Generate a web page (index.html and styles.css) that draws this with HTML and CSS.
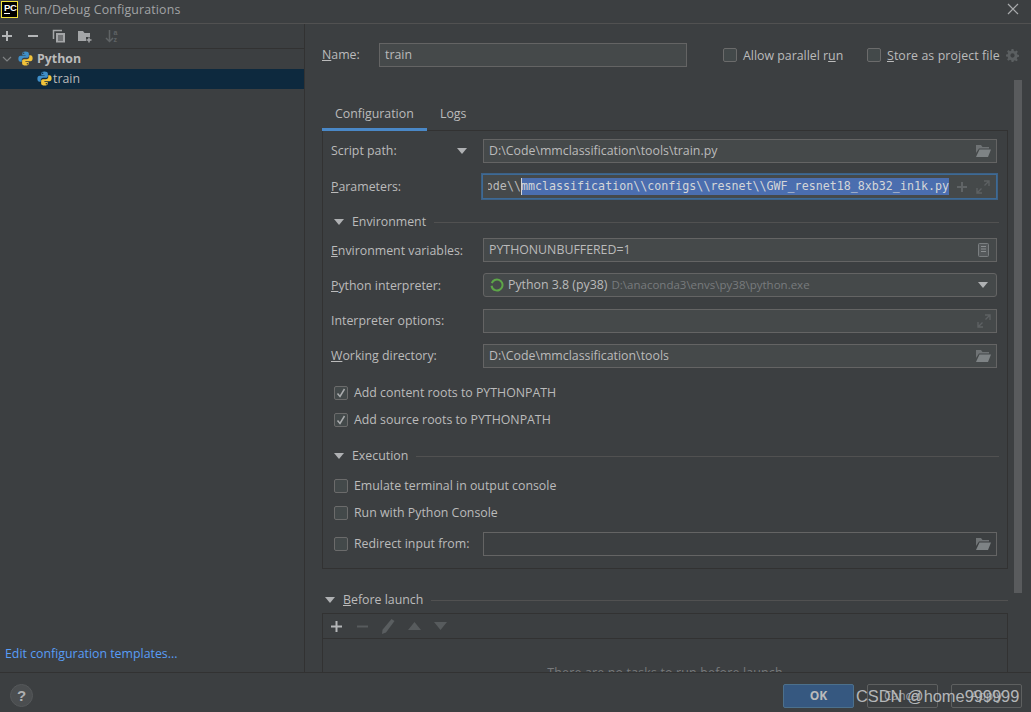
FILE: index.html
```html
<!DOCTYPE html>
<html lang="en">
<head>
<meta charset="utf-8">
<title>Run/Debug Configurations</title>
<link rel="stylesheet" href="styles.css">
</head>
<body>
<svg class="defs" width="0" height="0" aria-hidden="true">
  <defs>
    <symbol id="py" viewBox="0 0 16 16">
      <path fill="#3f8fc9" d="M7.9.5C5.6.5 4.6 1.4 4.6 2.8v1.6h3.5V5H2.8C1.3 5 .4 6.2.4 8.2s.9 3.3 2.3 3.3h1.3V9.7c0-1.4 1.1-2.4 2.5-2.4h3.2c1.1 0 1.9-.8 1.9-1.9V2.8C11.6 1.3 10.1.5 7.9.5zM6 1.5a.8.8 0 1 1 0 1.7.8.8 0 0 1 0-1.7z"/>
      <path fill="#f2c33a" d="M8.1 15.5c2.3 0 3.3-.9 3.3-2.3v-1.6H7.9V11h5.3c1.5 0 2.4-1.2 2.4-3.2s-.9-3.3-2.3-3.3H12v1.8c0 1.4-1.1 2.4-2.5 2.4H6.300c-1.1 0-1.9.8-1.9 1.900v2.600c0 1.500 1.500 2.300 3.700 2.300zM10 14.500a.8.8 0 1 1 0-1.700.8.8 0 0 1 0 1.700z"/>
    </symbol>
    <symbol id="folder" viewBox="0 0 16 14">
      <path fill="#6f7375" d="M1 1h5l1.500 2H14v1.500H4L1 9z"/>
      <path fill="#7e8385" d="M4.500 5.500H16L13 13H1z"/>
    </symbol>
    <symbol id="expand" viewBox="0 0 14 14">
      <path fill="none" stroke="#5d6163" stroke-width="1.400" d="M8 1h5v5M13 1 8.500 5.500M1 8v5h5M1 13l4.500-4.500"/>
    </symbol>
  </defs>
</svg>

<div class="dialog">
  <header class="titlebar">
    <span class="logo"><span class="logo-text">PC</span><span class="logo-bar"></span></span>
    <span class="title">Run/Debug Configurations</span>
    <svg class="close" width="12" height="12" viewBox="0 0 12 12"><path d="M1 1l10 10M11 1 1 11" stroke="#a9abad" stroke-width="1.200" fill="none"/></svg>
  </header>

  <main class="main">
    <aside class="sidebar">
      <div class="side-toolbar">
        <svg width="12" height="12" viewBox="0 0 12 12"><path d="M6 1v10M1 6h10" stroke="#b4b6b8" stroke-width="2"/></svg>
        <svg width="12" height="12" viewBox="0 0 12 12"><path d="M1 6h10" stroke="#b4b6b8" stroke-width="2"/></svg>
        <svg width="14" height="14" viewBox="0 0 14 14"><path d="M1.500 10V1.500H10" fill="none" stroke="#a4a6a8" stroke-width="1.500"/><rect x="4" y="4" width="9" height="9.500" fill="#a4a6a8"/><path d="M6 7h5M6 9h5M6 11h5" stroke="#3c3f41"/></svg>
        <svg width="16" height="14" viewBox="0 0 16 14"><path d="M1 2h5l1.500 2H13v4H9v4H1z" fill="#a4a6a8"/><path d="M12 8.500v5M9.500 11h5" stroke="#a4a6a8" stroke-width="1.500"/></svg>
        <span class="sort">
          <svg width="9" height="14" viewBox="0 0 9 14"><path d="M4.500 1v11M1 9l3.500 3.500L8 9" fill="none" stroke="#5f6365" stroke-width="1.500"/></svg>
          <span class="sort-letters">a<br>z</span>
        </span>
      </div>
      <ul class="tree">
        <li class="tree-row">
          <svg class="chev" width="10" height="6" viewBox="0 0 10 6"><path d="M1 1l4 4 4-4" fill="none" stroke="#7f8284" stroke-width="1.200"/></svg>
          <svg class="py" width="15" height="15"><use href="#py"/></svg>
          <b class="tree-label">Python</b>
        </li>
        <li class="tree-row selected">
          <svg class="py" width="15" height="15"><use href="#py"/></svg>
          <span class="tree-label train">train</span>
        </li>
      </ul>
      <a class="templates">Edit configuration templates...</a>
    </aside>

    <section class="content">
      <div class="name-row">
        <label class="name-label"><u>N</u>ame:</label>
        <div class="field name-field"><span>train</span></div>
        <label class="check allow"><span class="box"></span><span class="top-text">Allow parallel r<u>u</u>n</span></label>
        <label class="check store"><span class="box"></span><span class="top-text"><u>S</u>tore as project file</span></label>
        <svg class="gear" width="13" height="13" viewBox="0 0 14 14"><path fill="#5b5f61" fill-rule="evenodd" d="M6 0h2l.4 2 1.300.6L11.400 1.500 12.800 3l-1.100 1.700.5 1.300 1.800.4v2l-1.900.4-.5 1.300 1.100 1.700-1.400 1.400-1.700-1.100-1.200.5L8 14H6l-.4-1.900-1.300-.5-1.700 1.100L1.200 11.300l1.100-1.700-.5-1.300L0 8V6l1.800-.4.500-1.300L1.200 2.600 2.600 1.200l1.700 1.100 1.300-.5zM7 4.700a2.300 2.300 0 1 0 0 4.600 2.300 2.300 0 0 0 0-4.600z"/></svg>
      </div>

      <nav class="tabs">
        <span class="tab active">Configuration</span>
        <span class="tab">Logs</span>
      </nav>

      <div class="panel">
        <div class="row first">
          <div class="label script-label"><span>Script path:</span><i class="tri"></i></div>
          <div class="field"><span>D:\Code\mmclassification\tools\train.py</span><svg class="ficon" width="16" height="14"><use href="#folder"/></svg></div>
        </div>
        <div class="row params">
          <div class="label"><span><u>P</u>arameters:</span></div>
          <div class="field focused">
            <div class="param-text"><span class="param-inner">D:\\Code\\<span class="sel"><i class="caret"></i>mmclassification\\configs\\resnet\\GWF_resnet18_8xb32_in1k.py</span></span></div>
            <svg class="fplus" width="10" height="10" viewBox="0 0 10 10"><path d="M5 0v10M0 5h10" stroke="#606466" stroke-width="2"/></svg>
            <svg class="fexp" width="14" height="14"><use href="#expand"/></svg>
          </div>
        </div>

        <div class="section env-head"><i class="tri"></i><span>Environment</span><span class="line"></span></div>
        <div class="row env-first">
          <div class="label low"><span><u>E</u>nvironment variables:</span></div>
          <div class="field"><span>PYTHONUNBUFFERED=1</span>
            <svg class="ficon doc" width="11" height="14" viewBox="0 0 11 14"><rect x=".5" y=".5" width="10" height="13" rx="1" fill="#55595b" stroke="#7a7e80"/><path d="M3 3.500h5M3 6h5M3 8.500h5" stroke="#8a8e90"/></svg>
          </div>
        </div>
        <div class="row">
          <div class="label low"><span><u>P</u>ython interpreter:</span></div>
          <div class="field combo">
            <svg class="spin" width="14" height="14" viewBox="0 0 14 14"><circle cx="7" cy="7" r="5.500" fill="none" stroke="#5da648" stroke-width="2" stroke-dasharray="31 3.600" transform="rotate(200 7 7)"/></svg>
            <span>Python 3.8 (py38)</span><span class="muted">D:\anaconda3\envs\py38\python.exe</span>
            <i class="tri end"></i>
          </div>
        </div>
        <div class="row options">
          <div class="label"><span>Interpreter options:</span></div>
          <div class="field"><svg class="ficon" width="14" height="14"><use href="#expand"/></svg></div>
        </div>
        <div class="row">
          <div class="label"><span><u>W</u>orking directory:</span></div>
          <div class="field"><span>D:\Code\mmclassification\tools</span><svg class="ficon" width="16" height="14"><use href="#folder"/></svg></div>
        </div>

        <label class="check line-check c1"><span class="box on"><svg width="12" height="12" viewBox="0 0 12 12"><path d="M2.500 6.500 5 9.500l4.500-7.500" fill="none" stroke="#a9abad" stroke-width="1.500"/></svg></span><span>Add content roots to PYTHONPATH</span></label>
        <label class="check line-check c2"><span class="box on"><svg width="12" height="12" viewBox="0 0 12 12"><path d="M2.500 6.500 5 9.500l4.500-7.500" fill="none" stroke="#a9abad" stroke-width="1.500"/></svg></span><span>Add source roots to PYTHONPATH</span></label>

        <div class="section exec-head"><i class="tri"></i><span>Execution</span><span class="line"></span></div>
        <label class="check line-check c3"><span class="box"></span><span>Emulate terminal in output console</span></label>
        <label class="check line-check c2"><span class="box"></span><span>Run with Python Console</span></label>
        <div class="row redirect">
          <label class="check line-check"><span class="box"></span><span>Redirect input from:</span></label>
          <div class="field empty"><svg class="ficon" width="16" height="14"><use href="#folder"/></svg></div>
        </div>
      </div>

      <div class="section before-head"><i class="tri"></i><span><u>B</u>efore launch</span><span class="line"></span></div>
      <div class="tasks">
        <div class="tasks-toolbar">
          <svg width="11" height="11" viewBox="0 0 11 11"><path d="M5.500 0v11M0 5.500h11" stroke="#b4b6b8" stroke-width="2"/></svg>
          <svg width="11" height="11" viewBox="0 0 11 11"><path d="M0 5.500h11" stroke="#575b5d" stroke-width="2"/></svg>
          <svg width="14" height="15" viewBox="0 0 14 15"><path d="M10.500 0 13.500 2 5 13.500 1 15l.5-4.300z" fill="#5a5e60"/></svg>
          <svg width="13" height="8" viewBox="0 0 13 8"><path d="M6.500 0 13 8H0z" fill="#575b5d"/></svg>
          <svg width="13" height="8" viewBox="0 0 13 8"><path d="M0 0h13L6.500 8z" fill="#575b5d"/></svg>
        </div>
        <p class="tasks-empty">There are no tasks to run before launch</p>
      </div>

      <div class="scrollbar"></div>
    </section>
  </main>

  <footer class="footer">
    <span class="help">?</span>
    <div class="buttons">
      <button class="btn primary">OK</button>
      <button class="btn">Cancel</button>
      <button class="btn">Apply</button>
    </div>
  </footer>
  <div class="watermark">CSDN @home999999</div>
</div>
</body>
</html>
```

FILE: styles.css
```css
* { box-sizing: border-box; }
html, body { margin: 0; padding: 0; }
body {
  width: 1031px;
  height: 712px;
  overflow: hidden;
  background: #3c3f41;
  color: #bbbbbb;
  font: 12.35px/16px "Open Sans", "Noto Sans", sans-serif;
}
.defs { position: absolute; }
.dialog { position: relative; width: 1031px; height: 712px; display: flex; flex-direction: column; }
i { display: block; }

/* title bar */
.titlebar {
  height: 24px;
  flex: none;
  display: flex;
  align-items: center;
  border-bottom: 1px solid #515151;
  padding: 0 12px 3px 1px;
}
.logo {
  width: 17px;
  height: 17px;
  align-self: flex-start;
  margin-top: 1px;
  background: #000;
  border: 1px solid #f3e33a;
  display: flex;
  flex-direction: column;
  align-items: flex-start;
  padding: 1px 0 0 2px;
  overflow: hidden;
}
.logo-text { color: #fff; font: bold 9.5px/10px "Liberation Sans", sans-serif; letter-spacing: -.4px; }
.logo-bar { width: 6px; height: 1px; background: #fff; }
.title { margin-left: 6px; color: #a2a4a6; letter-spacing: .15px; }
.close { margin-left: auto; margin-bottom: 3px; }

/* layout */
.main { flex: 1; min-height: 0; display: flex; overflow: hidden; }
.sidebar {
  width: 305px;
  flex: none;
  display: flex;
  flex-direction: column;
  border-right: 1px solid #323232;
}
.side-toolbar {
  height: 25px;
  flex: none;
  display: grid;
  grid-auto-flow: column;
  grid-auto-columns: 26px;
  justify-content: start;
  justify-items: center;
  align-items: center;
  margin-left: -6px;
  border-bottom: 1px solid #323232;
}
.sort { display: flex; align-items: center; }
.sort-letters { font: bold 7px/7px "Liberation Sans", sans-serif; color: #5f6365; }
.tree { list-style: none; margin: 0; padding: 0; flex: 1; }
.tree-row { height: 20px; display: flex; align-items: center; padding: 0 0 1px 2px; }
.tree-row.selected { background: #0d293e; padding-left: 37px; }
.chev { margin-right: 6px; }
.py { flex: none; }
.tree-label { margin-left: 4px; }
.tree-label.train { margin-left: 1px; }
.templates { color: #589df6; padding: 0 0 10px 5px; }

.content { position: relative; flex: 1; min-width: 0; padding: 19px 23px 0 17px; }
.name-row { display: flex; align-items: center; height: 24px; }
.name-label { width: 57px; flex: none; }
.name-field { width: 308px; flex: none; }
.allow { margin-left: 36px; width: 144px; flex: none; }
.store { width: 139px; flex: none; letter-spacing: .1px; }
.top-text { position: relative; top: 1px; }
.gear { flex: none; margin-top: 1px; }

.check { display: flex; align-items: center; gap: 6px; }
.box {
  width: 14px;
  height: 14px;
  flex: none;
  border: 1px solid #6b6b6b;
  border-radius: 2px;
  background: #43494a;
  display: flex;
  align-items: center;
  justify-content: center;
}

/* fields */
.field {
  position: relative;
  height: 24px;
  display: flex;
  align-items: center;
  padding: 0 5px;
  background: #45494a;
  border: 1px solid #646464;
  min-width: 0;
}
.ficon { margin-left: auto; flex: none; }
.ficon.doc { margin-right: 2px; }
.field.empty { background: #3c3f41; }
.combo { border-radius: 3px; }
.spin { flex: none; margin-right: 4px; margin-left: 1px; }
.muted { color: #787b7d; font-size: 11.5px; margin-left: 4px; }
.tri {
  width: 0;
  height: 0;
  flex: none;
  border-left: 5px solid transparent;
  border-right: 5px solid transparent;
  border-top: 6px solid #afb1b3;
}
.tri.end { margin-left: auto; margin-right: 3px; }

/* tabs */
.tabs { display: flex; height: 30px; margin-top: 33px; }
.tab { padding: 6px 13px 0; height: 30px; }
.tab.active { width: 105px; height: 31px; border-bottom: 3px solid #4a88c7; position: relative; z-index: 1; }

/* panel */
.panel {
  width: 686px;
  height: 439px;
  border: 1px solid #323232;
  padding: 8px 10px 0 8px;
}
.row { display: grid; grid-template-columns: 152px 1fr; align-items: center; margin-top: 11px; height: 24px; }
.row.first { margin-top: 0; }
.label { display: flex; align-items: center; }
.label.low { position: relative; top: 1px; }
.script-label { justify-content: space-between; padding-right: 16px; }
.focused {
  height: 25px;
  margin-left: -1px;
  background: #45494a;
  border: 1px solid #3d6a96;
  box-shadow: 0 0 0 1px #3d6185;
}
.param-text {
  width: 461px;
  flex: none;
  display: flex;
  justify-content: flex-end;
  overflow: hidden;
  white-space: nowrap;
  font: 11.66px/17px "DejaVu Sans Mono", monospace;
}
.param-inner { flex: none; }
.sel { position: relative; display: inline-block; background: #4b6eaf; color: #d4d6d8; }
.caret { position: absolute; left: 0; top: 0; width: 1px; height: 17px; background: #d4d6d8; }
.fplus { margin-left: 8px; flex: none; }
.fexp { margin-left: 9px; flex: none; }

.section { display: flex; align-items: center; gap: 8px; height: 16px; }
.section .line { flex: 1; height: 1px; background: #515151; }
.env-head { margin: 16px 0 0 3px; width: 665px; }
.env-first { margin-top: 8px; }
.row.options { margin-top: 12px; }
.line-check { height: 20px; margin-left: 3px; }
.c1 { margin-top: 15px; }
.c2 { margin-top: 7px; }
.c3 { margin-top: 12px; }
.exec-head { margin: 18px 0 0 3px; width: 665px; }
.row.redirect { margin-top: 9px; }
.row.redirect .line-check { margin-top: -1px; }
.before-head { margin-top: 23px; margin-left: 3px; width: 683px; }

.tasks { width: 686px; margin-top: 5px; height: 200px; border: 1px solid #323232; }
.tasks-toolbar {
  height: 25px;
  display: grid;
  grid-auto-flow: column;
  grid-auto-columns: 26px;
  justify-content: start;
  justify-items: center;
  align-items: center;
  border-bottom: 1px solid #323232;
}
.tasks-empty { margin: 26px 0 0; text-align: center; color: #77797b; letter-spacing: .2px; }

.scrollbar {
  position: absolute;
  left: 709px;
  top: 56px;
  width: 8px;
  height: 513px;
  background: #595b5d;
}

/* footer */
.footer {
  height: 40px;
  flex: none;
  display: flex;
  align-items: flex-start;
  justify-content: space-between;
  border-top: 1px solid #323232;
  padding: 11px 9px 0 10px;
}
.help {
  width: 23px;
  height: 23px;
  border-radius: 50%;
  background: #4b4e50;
  border: 1px solid #55585a;
  color: #aeb0b2;
  font: bold 15px/21px "Liberation Sans", sans-serif;
  text-align: center;
}
.buttons { display: flex; gap: 13px; }
.btn {
  width: 71px;
  height: 24px;
  padding: 0;
  border: 1px solid #5e6060;
  border-radius: 2px;
  background: #3c3f41;
  color: #9a9c9e;
  font: 12px/20px "Open Sans", "Noto Sans", sans-serif;
}
.btn.primary { background: #365880; border-color: #4c708c; color: #bbbbbb; font-weight: 700; }

.watermark {
  position: absolute;
  left: 856px;
  top: 685px;
  color: #c2c4c6;
  font: 16.4px/22px "Liberation Sans", sans-serif;
  white-space: nowrap;
  opacity: .9;
}
```
